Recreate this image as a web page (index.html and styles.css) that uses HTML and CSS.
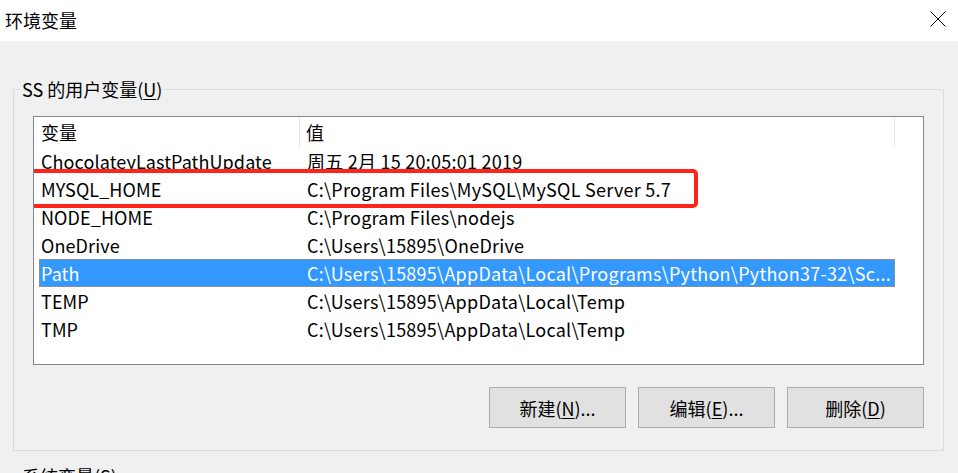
FILE: index.html
```html
<!DOCTYPE html>
<html lang="zh-CN">

<head>
    <meta charset="UTF-8">
    <meta name="viewport" content="width=device-width, initial-scale=1.0">
    <title>环境变量</title>

    <link rel="stylesheet" href="styles.css">
</head>

<body>
    <div class="titlebar">
        <span class="title">环境变量</span>
        <svg class="close" width="16" height="16" viewBox="0 0 16 16">
            <path d="M0.5 0.5 L15.5 15.5 M15.5 0.5 L0.5 15.5" stroke="#000" stroke-width="1" fill="none" />
        </svg>
    </div>

    <div class="content">
        <fieldset class="group">
            <legend>SS 的用户变量(<u>U</u>)</legend>
            <div class="list">
                <div class="head">
                    <div class="c1">变量</div>
                    <div class="c2">值</div>
                </div>
                <div class="row">
                    <div class="c1">ChocolateyLastPathUpdate</div>
                    <div class="c2">周五 2月 15 20:05:01 2019</div>
                </div>
                <div class="row marked">
                    <div class="c1">MYSQL_HOME</div>
                    <div class="c2">C:\Program Files\MySQL\MySQL Server 5.7</div>
                </div>
                <div class="row">
                    <div class="c1">NODE_HOME</div>
                    <div class="c2">C:\Program Files\nodejs</div>
                </div>
                <div class="row">
                    <div class="c1">OneDrive</div>
                    <div class="c2">C:\Users\15895\OneDrive</div>
                </div>
                <div class="row selected">
                    <div class="c1">Path</div>
                    <div class="c2">C:\Users\15895\AppData\Local\Programs\Python\Python37-32\Sc...</div>
                </div>
                <div class="row">
                    <div class="c1">TEMP</div>
                    <div class="c2">C:\Users\15895\AppData\Local\Temp</div>
                </div>
                <div class="row">
                    <div class="c1">TMP</div>
                    <div class="c2">C:\Users\15895\AppData\Local\Temp</div>
                </div>
            </div>
            <div class="buttons">
                <button class="btn">新建(<u>N</u>)...</button>
                <button class="btn">编辑(<u>E</u>)...</button>
                <button class="btn">删除(<u>D</u>)</button>
            </div>
        </fieldset>

        <fieldset class="group">
            <legend>系统变量(<u>S</u>)</legend>
        </fieldset>
    </div>
</body>

</html>
```

FILE: styles.css
```css
* {
    padding: 0;
    margin: 0;
    box-sizing: border-box;
}

html,
body {
    height: 473px;
    overflow: hidden;
}

body {
    font-family: "Noto Sans CJK SC", "Noto Sans", sans-serif;
    font-size: 18px;
    color: #000;
    background: #f0f0f0;
}

u {
    text-decoration-thickness: 1px;
    text-underline-offset: 2px;
}

.titlebar {
    height: 41px;
    background: #fff;
    display: flex;
    align-items: center;
    justify-content: space-between;
    padding: 0 12px 0 5px;
}

.titlebar .title {
    line-height: 20px;
    margin-top: -1px;
}

.titlebar .close {
    display: block;
    margin-top: -4px;
}

.content {
    padding: 38px 0 0 13px;
}

.group {
    width: 931px;
    border: 1px solid #dcdcdc;
    padding: 17px 19px 22px 19px;
    margin-bottom: 15px;
}

.group legend {
    margin-left: -13px;
    padding: 0 2px;
    line-height: 20px;
}

.list {
    height: 249px;
    border: 1px solid #828790;
    background: #fff;
    overflow: hidden;
}

.head {
    height: 30px;
    display: flex;
    align-items: center;
    padding-left: 5px;
}

.head .c1 {
    width: 261px;
    height: 30px;
    line-height: 30px;
    padding-left: 2px;
    border-right: 1px solid #e5e5e5;
}

.head .c2 {
    width: 595px;
    height: 30px;
    line-height: 30px;
    padding-left: 6px;
    border-right: 1px solid #e5e5e5;
}

.row {
    height: 28px;
    width: 856px;
    margin-left: 5px;
    display: flex;
    align-items: center;
    white-space: nowrap;
    position: relative;
}

.row .c1 {
    width: 261px;
    flex: none;
    padding-left: 2px;
    letter-spacing: 0.1px;
}

.row .c2 {
    padding-left: 7px;
    letter-spacing: 0.25px;
}

.row.selected {
    background: #3399ff;
    color: #fff;
    outline: 1px dotted #d08a3a;
    outline-offset: -1px;
}

.row.marked::after {
    content: "";
    box-sizing: border-box;
    position: absolute;
    left: -12px;
    top: -6px;
    width: 671px;
    height: 39px;
    border: 4px solid #ff2419;
    border-radius: 5px;
}

.buttons {
    display: flex;
    justify-content: flex-end;
    gap: 12px;
    margin-top: 22px;
}

.btn {
    width: 137px;
    height: 41px;
    background: #e1e1e1;
    border: 1px solid #adadad;
    font-family: inherit;
    font-size: 18px;
    color: #000;
}
```
